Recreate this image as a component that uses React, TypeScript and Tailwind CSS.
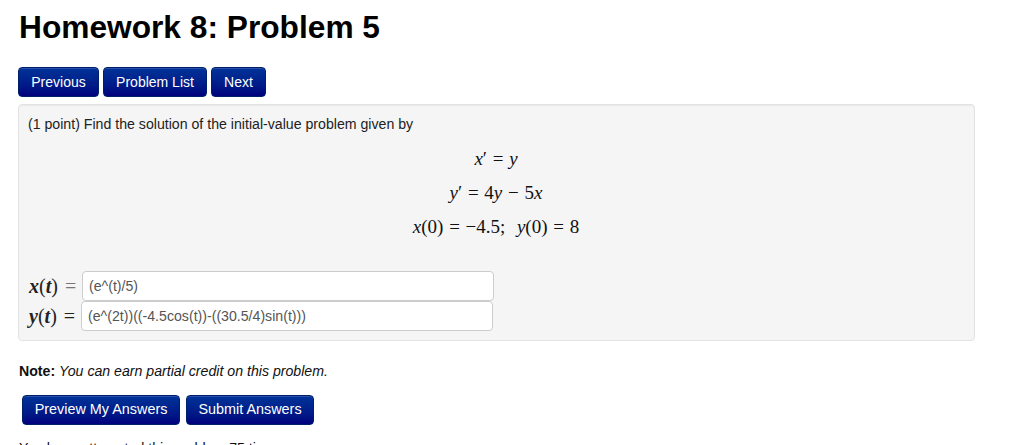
const sans = "font-['Liberation_Sans',Arial,sans-serif]";
const math = "font-['Liberation_Serif','Times_New_Roman',serif]";

const btn =
  "flex items-center justify-center rounded-[4px] border border-[#001f6b] bg-gradient-to-b from-[#003399] to-[#00007d] text-white shadow-[inset_0_1px_0_rgba(255,255,255,0.15)]";

const MathLine = ({ children }: { children: React.ReactNode }) => (
  <p className={`${math} h-[34px] text-center text-[19px] leading-[34px] text-[#111] [word-spacing:1px]`}>{children}</p>
);

const AnswerRow = ({
  name,
  value,
  labelWidth,
  eqColor,
}: {
  name: string;
  value: string;
  labelWidth: string;
  eqColor: string;
}) => (
  <div className="flex items-center">
    <span className={`${math} ${labelWidth} shrink-0 whitespace-nowrap pl-px text-[20px] text-[#222] [word-spacing:2px]`}>
      <b>
        <i>{name}</i>
      </b>
      (
      <b>
        <i>t</i>
      </b>
      ) <span className={eqColor}>=</span>
    </span>
    <input
      readOnly
      value={value}
      className="h-[30px] w-[412px] rounded-[4px] border border-[#cccccc] bg-white px-[6px] text-[14.15px] text-[#555] outline-none"
    />
  </div>
);

export default function App() {
  return (
    <div className={`${sans} h-[445px] w-[1024px] overflow-hidden bg-white pl-[18px] text-black`}>
      <h1 className="pl-px pt-[8px] text-[31.7px] font-bold leading-[38px]">Homework 8: Problem 5</h1>

      <div className="mt-[21px] flex gap-[4px] text-[14px]">
        <a className={`${btn} h-[30px] w-[81px]`}>Previous</a>
        <a className={`${btn} h-[30px] w-[104px]`}>Problem List</a>
        <a className={`${btn} h-[30px] w-[55px]`}>Next</a>
      </div>

      {/* Problem box */}
      <div className="mt-[7px] h-[237px] w-[957px] rounded-[4px] border border-[#e3e3e3] bg-[#f5f5f5] pl-[9px] pt-[11px] shadow-[inset_0_1px_1px_rgba(0,0,0,0.05)]">
        <p className="text-[14.15px] leading-[16px] text-[#222]">(1 point) Find the solution of the initial-value problem given by</p>
        <div className="mt-[10px] pr-[10px]">
          <MathLine>
            <i>x</i>′ = <i>y</i>
          </MathLine>
          <MathLine>
            <i>y</i>′ = 4<i>y</i> − 5<i>x</i>
          </MathLine>
          <MathLine>
            <i>x</i>(0) = −4.5;&nbsp;&nbsp;<i>y</i>(0) = 8
          </MathLine>
        </div>
        <div className="mt-[27px] flex flex-col">
          <AnswerRow name="x" value="(e^(t)/5)" labelWidth="w-[54px]" eqColor="text-[#777]" />
          <AnswerRow
            name="y"
            value="(e^(2t))((-4.5cos(t))-((30.5/4)sin(t)))"
            labelWidth="w-[53px]"
            eqColor="text-[#222]"
          />
        </div>
      </div>

      <p className="mt-[22px] pl-px text-[14.15px] leading-[16px] text-[#111]">
        <b>Note:</b> <i>You can earn partial credit on this problem.</i>
      </p>

      <div className="ml-[4px] mt-[16px] flex gap-[6px] text-[14.4px]">
        <button className={`${btn} h-[30px] w-[158px]`}>Preview My Answers</button>
        <button className={`${btn} h-[30px] w-[128px]`}>Submit Answers</button>
      </div>

      <p className="mt-[15px] pl-px text-[14.15px] leading-[16px] text-[#111]">You have attempted this problem 75 times.</p>
    </div>
  );
}
